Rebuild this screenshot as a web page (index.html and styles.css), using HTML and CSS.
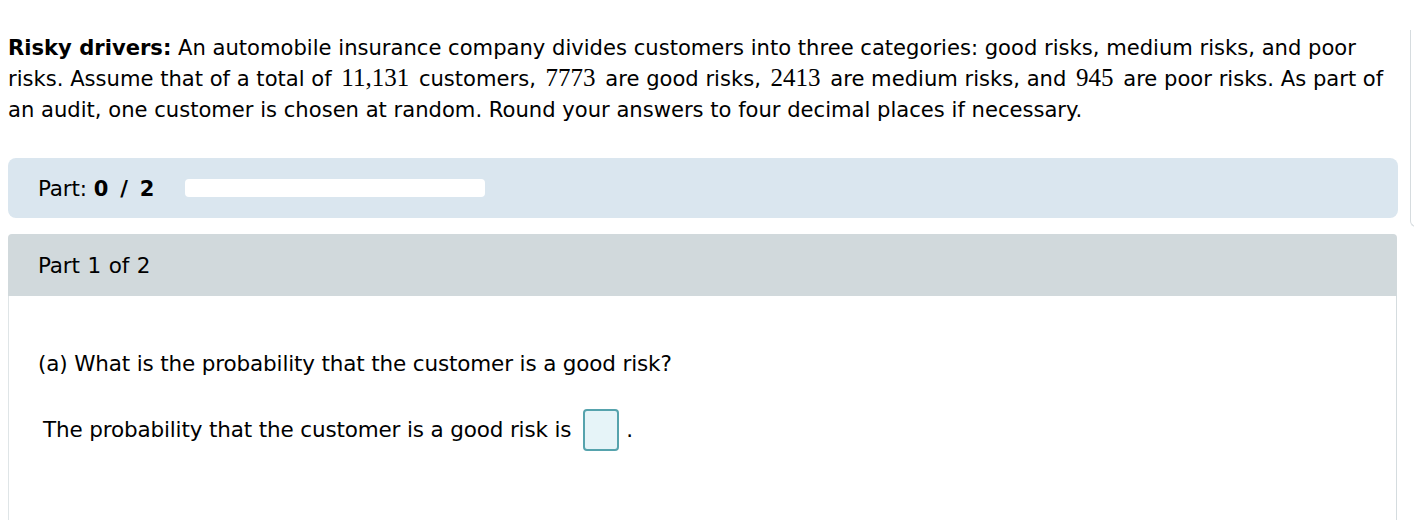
FILE: index.html
```html
<!DOCTYPE html>
<html>
<head>
<meta charset="utf-8">
<link rel="stylesheet" href="styles.css">
</head>
<body>
<div class="page">
  <p class="intro"><b>Risky drivers:</b> An automobile insurance company divides customers into three categories: good risks, medium risks, and poor risks. Assume that of a total of <span class="num">11,131</span> customers, <span class="num">7773</span> are good risks, <span class="num">2413</span> are medium risks, and <span class="num">945</span> are poor risks. As part of an audit, one customer is chosen at random. Round your answers to four decimal places if necessary.</p>

  <div class="progress">
    <span class="plabel">Part: <b>0 / 2</b></span>
    <div class="pbar"></div>
  </div>

  <div class="part">
    <div class="part-head">Part 1 of 2</div>
    <div class="part-body">
      <p class="q">(a) What is the probability that the customer is a good risk?</p>
      <p class="ans">The probability that the customer is a good risk is <span class="input"></span>.</p>
    </div>
  </div>
  <div class="side"></div>
</div>
</body>
</html>
```

FILE: styles.css
```css
html, body {
  margin: 0;
  padding: 0;
  background: #ffffff;
}
.page {
  position: relative;
  padding: 0 16px 0 8px;
  font-family: "DejaVu Sans", Verdana, sans-serif;
  color: #000;
}
.intro {
  margin: 0;
  padding-top: 32px;
  font-size: 21.1px;
  line-height: 31px;
  width: 1390px;
}
.num {
  font-family: "Liberation Serif", "Times New Roman", serif;
  font-size: 25px;
  line-height: 1;
  padding: 0 3px;
}
.progress {
  margin-top: 33px;
  height: 60px;
  width: 1390px;
  background: #dae6ef;
  border-radius: 8px;
  display: flex;
  align-items: center;
  box-sizing: border-box;
  padding-left: 30px;
}
.plabel {
  font-size: 21.5px;
  letter-spacing: -0.15px;
  width: 147px;
}
.plabel b {
  font-size: 21px;
  letter-spacing: 0.3px;
  word-spacing: 4px;
}
.pbar {
  width: 300px;
  height: 18px;
  background: #ffffff;
  border-radius: 4px;
}
.part {
  margin-top: 16px;
  width: 1389px;
}
.part-head {
  height: 62px;
  background: #d1d9dc;
  border-radius: 4px 4px 0 0;
  box-sizing: border-box;
  padding-left: 30px;
  display: flex;
  align-items: center;
  font-size: 21.5px;
  letter-spacing: -0.15px;
  word-spacing: 1px;
}
.part-body {
  border-left: 1px solid #dfe5e7;
  border-right: 1px solid #d5dcdf;
  padding: 53px 0 80px 29px;
  font-size: 21.5px;
  letter-spacing: -0.15px;
}
.q {
  margin: 0;
  line-height: 30px;
}
.ans {
  margin: 30px 0 0 5px;
  line-height: 42px;
  display: flex;
  align-items: center;
}
.input {
  display: block;
  flex: none;
  width: 32px;
  height: 38px;
  margin-left: 12px;
  margin-right: 7px;
  border: 2px solid #56a3ad;
  border-radius: 4px;
  background: #e6f4f8;
}
.side {
  position: absolute;
  top: 30px;
  left: 1410px;
  width: 12px;
  height: 196px;
  border-left: 1px solid #d6dcdf;
  border-bottom: 1px solid #d6dcdf;
  border-bottom-left-radius: 6px;
}
```
